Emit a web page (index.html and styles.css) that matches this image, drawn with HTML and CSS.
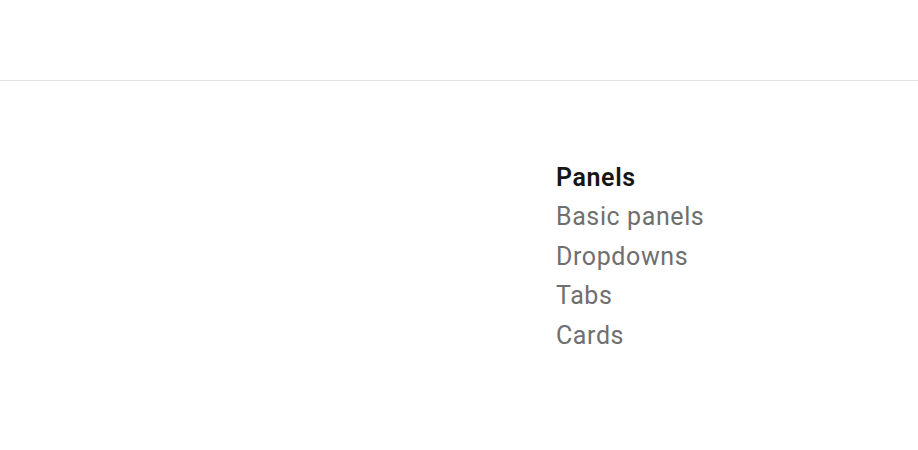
FILE: index.html
```html
<!DOCTYPE html>
<html lang="en">
<head>
    <meta charset="UTF-8">
    <meta name="viewport" content="width=device-width, initial-scale=1.0">
    <title>Panels</title>
    <link rel="stylesheet" href="styles.css">
</head>
<body>
    <header class="top-bar"></header>

    <main class="page">
        <div class="spacer"></div>
        <nav class="side-list">
            <h3 class="side-title">Panels</h3>
            <ul>
                <li>Basic panels</li>
                <li>Dropdowns</li>
                <li>Tabs</li>
                <li>Cards</li>
            </ul>
        </nav>
    </main>
</body>
</html>
```

FILE: styles.css
```css
/* General Styles */
body {
    font-family: Roboto, "Noto Sans", Arial, sans-serif;
    margin: 0;
    background: #fff;
}

.top-bar {
    height: 80px;
    border-bottom: 1px solid #e0e0e0;
}

.page {
    display: grid;
    grid-template-columns: 556px 1fr;
    padding-top: 77px;
}

.side-list {
    font-size: 25px;
    line-height: 39.4px;
    letter-spacing: 0.6px;
}

.side-title {
    margin: 0;
    font-size: 25px;
    font-weight: 600;
    color: #161616;
}

.side-list ul {
    list-style: none;
    margin: 0;
    padding: 0;
}

.side-list li {
    color: #6f6f6f;
}
```
